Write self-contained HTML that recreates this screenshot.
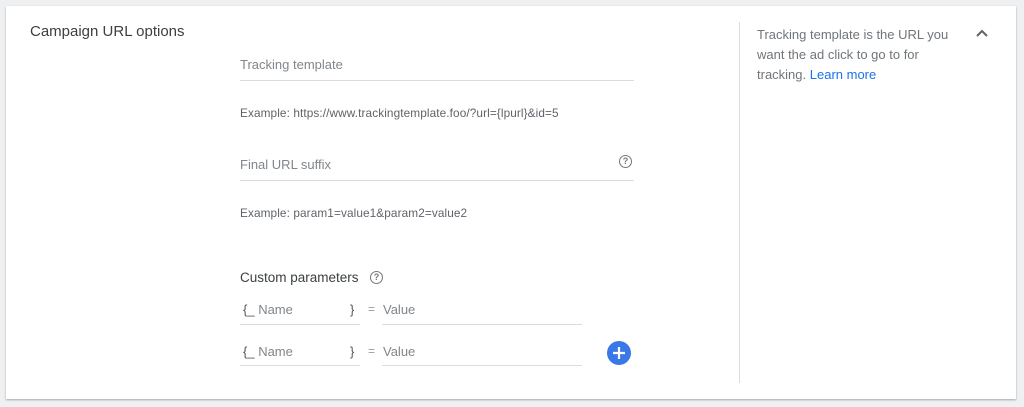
<!DOCTYPE html>
<html><head><style>
body{margin:0;width:1024px;height:407px;background:#eff0f2;font-family:"Liberation Sans",sans-serif;position:relative;overflow:hidden}
.card{position:absolute;left:6px;top:6px;width:1010px;height:393px;background:#fff;box-shadow:0 1px 2px rgba(0,0,0,.3)}
.t{position:absolute;white-space:nowrap;line-height:1}
.ul{position:absolute;height:1px;background:#dcdcdc}
.q{position:absolute;width:11px;height:11px;border:1.3px solid #777;border-radius:50%;font-size:9px;color:#777;text-align:center;line-height:11px;font-weight:bold}
</style></head><body>
<div class="card"></div>
<div class="t" style="left:30px;top:24px;font-size:15px;color:#3c4043">Campaign URL options</div>
<div class="t" style="left:240px;top:58px;font-size:13px;color:#80868b">Tracking template</div>
<div class="ul" style="left:240px;top:80px;width:394px"></div>
<div class="t" style="left:240px;top:108px;font-size:11.8px;color:#5f6368;letter-spacing:0.1px">Example: https://www.trackingtemplate.foo/?url={lpurl}&amp;id=5</div>
<div class="t" style="left:240px;top:158px;font-size:13px;color:#80868b">Final URL suffix</div>
<div class="q" style="left:619px;top:155px">?</div>
<div class="ul" style="left:240px;top:180px;width:394px"></div>
<div class="t" style="left:240px;top:208px;font-size:11.8px;color:#5f6368;letter-spacing:0.1px">Example: param1=value1&amp;param2=value2</div>
<div class="t" style="left:240px;top:271px;font-size:13.5px;color:#3c4043">Custom parameters</div>
<div class="q" style="left:370px;top:271px">?</div>
<div class="t" style="left:243px;top:303px;font-size:13px;color:#80868b"><span style="color:#555">{_</span> Name</div>
<div class="t" style="left:350px;top:303px;font-size:13px;color:#555">}</div>
<div class="t" style="left:368px;top:303px;font-size:12px;color:#999">=</div>
<div class="t" style="left:383px;top:303px;font-size:13px;color:#80868b">Value</div>
<div class="ul" style="left:240px;top:324px;width:120px"></div>
<div class="ul" style="left:382px;top:324px;width:200px"></div>
<div class="t" style="left:243px;top:345px;font-size:13px;color:#80868b"><span style="color:#555">{_</span> Name</div>
<div class="t" style="left:350px;top:345px;font-size:13px;color:#555">}</div>
<div class="t" style="left:368px;top:345px;font-size:12px;color:#999">=</div>
<div class="t" style="left:383px;top:345px;font-size:13px;color:#80868b">Value</div>
<div class="ul" style="left:240px;top:365px;width:120px"></div>
<div class="ul" style="left:382px;top:365px;width:200px"></div>
<svg style="position:absolute;left:607px;top:341px" width="24" height="24"><circle cx="12" cy="12" r="12" fill="#3b78e7"/><path d="M12 6v12M6 12h12" stroke="#fff" stroke-width="2.2"/></svg>
<div style="position:absolute;left:739px;top:22px;width:1px;height:361px;background:#dadce0"></div>
<div class="t" style="left:757px;top:25px;font-size:13px;color:#70757a;line-height:20px;white-space:normal;width:210px">Tracking template is the URL you want the ad click to go to for tracking. <span style="color:#1a73e8">Learn more</span></div>
<svg style="position:absolute;left:975px;top:28px" width="14" height="10"><path d="M2 8l5-5 5 5" fill="none" stroke="#5f6368" stroke-width="2"/></svg>
</body></html>
